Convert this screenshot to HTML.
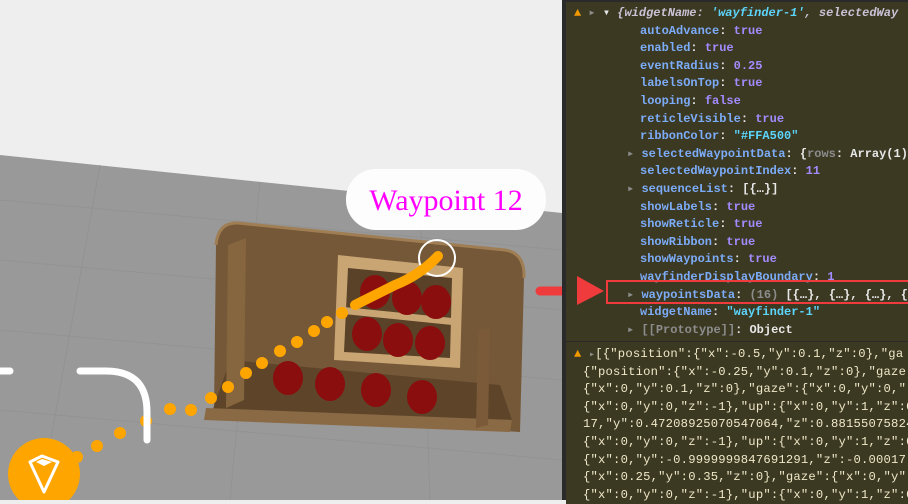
<!DOCTYPE html>
<html><head><meta charset="utf-8"><style>
html,body{margin:0;padding:0;width:908px;height:500px;overflow:hidden;background:#eeeeee}
#panel{position:absolute;left:562px;top:0;width:346px;height:500px;background:#2a2a2a}
.blk{position:absolute;left:4px;right:0;background:#3c3923;font-family:"Liberation Mono","DejaVu Sans Mono",monospace;font-size:12px;font-weight:bold;overflow:hidden}
.l{height:17.6px;line-height:17.6px;position:relative;white-space:pre;padding-left:74px}
.t{padding-left:61px}
.k{color:#7cacf8}.p{color:#c9c3d6}.v{color:#a18cff}.s{color:#5cd5fb}.g{color:#8c8c8c}.w{color:#e8e8e8}
.j{color:#efe8c8;font-weight:normal;font-size:12.2px;letter-spacing:0.2px;padding-left:17px}
</style></head><body>
<svg width="562" height="500" style="position:absolute;left:0;top:0">
<rect width="562" height="500" fill="#eeeeee"/>
<polygon points="0,155 562,213 562,500 0,500" fill="#999999"/>
<g stroke="#8f8f8f" stroke-width="1" opacity="0.6">
<line x1="0" y1="200" x2="562" y2="250"/><line x1="0" y1="260" x2="562" y2="310"/><line x1="0" y1="330" x2="562" y2="380"/><line x1="0" y1="410" x2="562" y2="460"/>
<line x1="100" y1="165" x2="40" y2="500"/><line x1="260" y1="182" x2="230" y2="500"/><line x1="420" y1="199" x2="430" y2="500"/>
</g>
<path d="M216,245 Q218,222 238,223 L505,250 Q525,253 524,278 L520,432 L214,412 Z" fill="#755838"/>
<path d="M216,245 Q218,222 238,223 L505,250 Q525,253 524,278" fill="none" stroke="#a07e54" stroke-width="3"/>
<path d="M230,360 L500,385 L512,420 L212,412 Z" fill="#5e452a"/>
<polygon points="206,408 512,420 510,432 204,420" fill="#8a6a45"/>
<polygon points="228,245 246,238 244,400 226,408" fill="#86663f"/>
<polygon points="478,330 490,328 488,425 476,428" fill="#7a5a38"/>
<polygon points="338,255 463,268 460,368 334,360" fill="#c9a574"/>
<polygon points="348,268 452,278 450,358 344,352" fill="#5a4228"/>
<polygon points="344,307 452,318 452,325 344,314" fill="#c9a574"/>
<g fill="#8a0e0e">
<ellipse cx="375" cy="292" rx="15" ry="17"/><ellipse cx="407" cy="298" rx="15" ry="17"/><ellipse cx="436" cy="302" rx="15" ry="17"/>
<ellipse cx="367" cy="334" rx="15" ry="17"/><ellipse cx="398" cy="340" rx="15" ry="17"/><ellipse cx="430" cy="343" rx="15" ry="17"/>
<ellipse cx="288" cy="378" rx="15" ry="17"/><ellipse cx="330" cy="384" rx="15" ry="17"/><ellipse cx="376" cy="390" rx="15" ry="17"/><ellipse cx="422" cy="397" rx="15" ry="17"/>
</g>
<rect x="346" y="169" width="200" height="61" rx="30" fill="#fdfdfd"/>
<text x="446" y="210" text-anchor="middle" font-family="Liberation Serif,serif" font-size="30" fill="#ff00ff">Waypoint 12</text>
<circle cx="437" cy="258" r="18" fill="none" stroke="#fff" stroke-width="2"/>
<path d="M438,256 Q420,275 395,285 Q375,295 355,305" stroke="#ffa500" stroke-width="10" stroke-linecap="round" fill="none"/>
<g fill="#ffa500">
<circle cx="342" cy="313" r="6"/><circle cx="327" cy="322" r="6"/><circle cx="314" cy="331" r="6"/><circle cx="297" cy="342" r="6"/><circle cx="280" cy="351" r="6"/><circle cx="262" cy="363" r="6"/><circle cx="246" cy="373" r="6"/><circle cx="228" cy="387" r="6"/><circle cx="211" cy="398" r="6"/><circle cx="191" cy="410" r="6"/><circle cx="170" cy="409" r="6"/><circle cx="146" cy="421" r="6"/><circle cx="120" cy="433" r="6"/><circle cx="97" cy="446" r="6"/><circle cx="77" cy="457" r="6"/>
</g>
<path d="M0,371 L10,371 M80,371 L106,371 Q147,371 147,412 L147,440" stroke="#fff" stroke-width="7" stroke-linecap="round" fill="none"/>
<circle cx="44" cy="474" r="36" fill="#ffa500"/>
<path d="M30,462 L42,456 L58,462 L44,492 Z" fill="none" stroke="#fff" stroke-width="3" stroke-linejoin="round"/>
<path d="M36,462 L42,459 L52,462 L44,466 Z" fill="#fff"/>
<line x1="540" y1="291" x2="580" y2="291" stroke="#ef3b3b" stroke-width="9" stroke-linecap="round"/>
</svg>
<div id="panel">
<div class="blk" style="top:2px;height:336px;padding-top:3px">
<div class="l" style="padding-left:8px"><span style="color:#f29900">▲</span> <span class="g">▸</span> <span class="w">▾</span> <i><span class="p">{widgetName: </span><span class="s">'wayfinder-1'</span><span class="p">, selectedWay</span></i></div>
<div class="l"><span class="k">autoAdvance</span><span class="w">: </span><span class="v">true</span></div>
<div class="l"><span class="k">enabled</span><span class="w">: </span><span class="v">true</span></div>
<div class="l"><span class="k">eventRadius</span><span class="w">: </span><span class="v">0.25</span></div>
<div class="l"><span class="k">labelsOnTop</span><span class="w">: </span><span class="v">true</span></div>
<div class="l"><span class="k">looping</span><span class="w">: </span><span class="v">false</span></div>
<div class="l"><span class="k">reticleVisible</span><span class="w">: </span><span class="v">true</span></div>
<div class="l"><span class="k">ribbonColor</span><span class="w">: </span><span class="s">"#FFA500"</span></div>
<div class="l t"><span class="g">▸ </span><span class="k">selectedWaypointData</span><span class="w">: {</span><span class="g">rows</span><span class="w">: Array(1)</span></div>
<div class="l"><span class="k">selectedWaypointIndex</span><span class="w">: </span><span class="v">11</span></div>
<div class="l t"><span class="g">▸ </span><span class="k">sequenceList</span><span class="w">: [{…}]</span></div>
<div class="l"><span class="k">showLabels</span><span class="w">: </span><span class="v">true</span></div>
<div class="l"><span class="k">showReticle</span><span class="w">: </span><span class="v">true</span></div>
<div class="l"><span class="k">showRibbon</span><span class="w">: </span><span class="v">true</span></div>
<div class="l"><span class="k">showWaypoints</span><span class="w">: </span><span class="v">true</span></div>
<div class="l"><span class="k">wayfinderDisplayBoundary</span><span class="w">: </span><span class="v">1</span></div>
<div class="l t"><span class="g">▸ </span><span class="k">waypointsData</span><span class="w">: </span><span class="g">(16)</span><span class="w"> [{…}, {…}, {…}, {</span></div>
<div class="l"><span class="k">widgetName</span><span class="w">: </span><span class="s">"wayfinder-1"</span></div>
<div class="l t"><span class="g">▸ </span><span class="g">[[Prototype]]</span><span class="w">: Object</span></div>
</div>
<div style="position:absolute;left:44px;top:280px;width:300px;height:20px;border:2px solid #ef3b3b"></div>
<div class="blk" style="top:342px;height:158px;padding-top:4px">
<div class="l j" style="padding-left:8px"><span style="color:#f29900">▲</span> <span class="g" style="font-size:10px">▸</span>[{"position":{"x":-0.5,"y":0.1,"z":0},"ga</div>
<div class="l j">{"position":{"x":-0.25,"y":0.1,"z":0},"gaze</div>
<div class="l j">{"x":0,"y":0.1,"z":0},"gaze":{"x":0,"y":0,"</div>
<div class="l j">{"x":0,"y":0,"z":-1},"up":{"x":0,"y":1,"z":0</div>
<div class="l j">17,"y":0.47208925070547064,"z":0.88155075824</div>
<div class="l j">{"x":0,"y":0,"z":-1},"up":{"x":0,"y":1,"z":0</div>
<div class="l j">{"x":0,"y":-0.9999999847691291,"z":-0.00017</div>
<div class="l j">{"x":0.25,"y":0.35,"z":0},"gaze":{"x":0,"y"</div>
<div class="l j">{"x":0,"y":0,"z":-1},"up":{"x":0,"y":1,"z":0</div>
<div class="l j">{"x":0,"y":1,"z":0},"eventRadius":0.25,"way</div>
</div>
</div>
<svg width="40" height="40" style="position:absolute;left:570px;top:272px"><polygon points="7,4 34,19 7,33" fill="#ef3b3b"/></svg>
</body></html>
